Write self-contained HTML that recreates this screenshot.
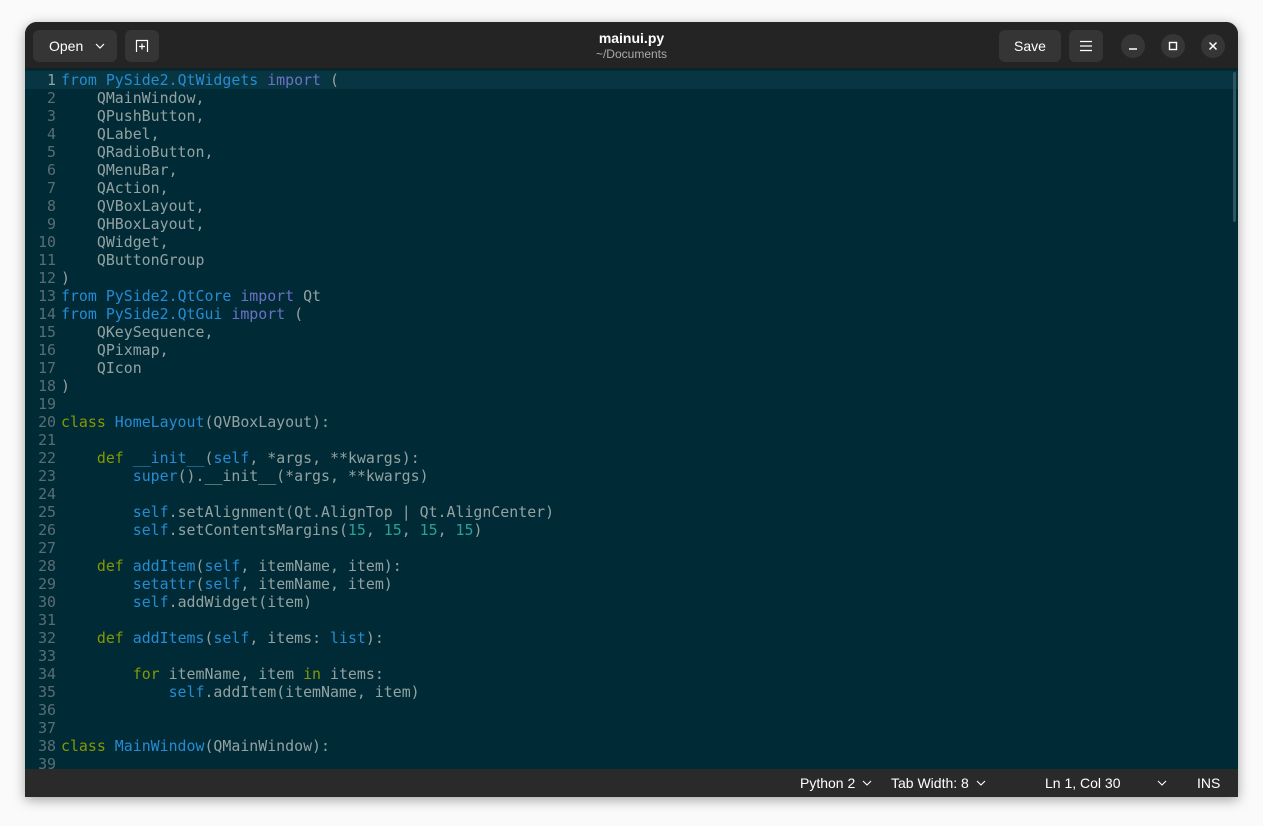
<!DOCTYPE html>
<html><head><meta charset="utf-8"><style>
*{margin:0;padding:0;box-sizing:border-box}
body{width:1263px;height:826px;background:#fafafa;position:relative;overflow:hidden;font-family:"Liberation Sans",sans-serif}
.win{position:absolute;left:25px;top:22px;width:1213px;height:775px;border-radius:12px 12px 0 0;overflow:hidden;box-shadow:0 3px 12px rgba(0,0,0,.35);background:#002b36}
.hdr{position:absolute;left:0;top:0;width:100%;height:47px;background:#242424;border-bottom:1px solid #1a1a1a}
.btn{position:absolute;top:8px;height:32px;background:#353535;border-radius:6px;color:#fff;font-size:14px;line-height:32px;text-align:center}
.cb{position:absolute;top:12px;width:24px;height:24px;border-radius:50%;background:#363636}
.title{position:absolute;left:0;width:100%;text-align:center;color:#fff}
.ed{position:absolute;left:0;top:47px;width:100%;height:700px;background:#002b36}
.cur{position:absolute;left:0;top:2px;width:100%;height:18px;background:#073642}
.code{position:absolute;left:0;top:2px;font-family:"DejaVu Sans Mono","Liberation Mono",monospace;font-size:14.9px;line-height:18px;color:#93a1a1;white-space:pre}
.ln{display:inline-block;width:31px;text-align:right;color:#586e75;margin-right:5px}
.k{color:#859900}.b{color:#268bd2}.p{color:#6c71c4}.n{color:#2aa198}
.sb{position:absolute;left:0;top:747px;width:100%;height:28px;background:#2a2a2a;color:#fff;font-size:14px;line-height:28px}
.sb span{position:absolute}
</style></head><body>
<div class="win">
<div class="hdr">
<div class="btn" style="left:8px;width:84px;text-align:left;padding-left:16px">Open <svg style="position:absolute;left:62px;top:13px" width="10" height="6"><path d="M1 1L5 5L9 1" stroke="#fff" fill="none" stroke-width="1.2"/></svg></div>
<div class="btn" style="left:100px;width:34px"><svg width="14" height="14" style="margin-top:9px"><path d="M1.5 13V1.5H12.5V13M7 4.5V10.5M4 7.5H10" stroke="#fff" fill="none" stroke-width="1.2"/></svg></div>
<div class="title" style="top:8px;font-size:14px;font-weight:bold">mainui.py</div>
<div class="title" style="top:25px;font-size:12px;color:#aaa">~/Documents</div>
<div class="btn" style="left:974px;width:62px">Save</div>
<div class="btn" style="left:1044px;width:34px"><svg width="12" height="12" style="margin-top:10px"><path d="M0 1.5H12M0 6H12M0 10.5H12" stroke="#fff" stroke-width="1.2"/></svg></div>
<div class="cb" style="left:1096px"><svg width="24" height="24"><path d="M8 15H16" stroke="#fff" stroke-width="1.4"/></svg></div>
<div class="cb" style="left:1136px"><svg width="24" height="24"><rect x="8.5" y="8.5" width="7" height="7" stroke="#fff" fill="none" stroke-width="1.4"/></svg></div>
<div class="cb" style="left:1176px"><svg width="24" height="24"><path d="M8.5 8.5L15.5 15.5M15.5 8.5L8.5 15.5" stroke="#fff" stroke-width="1.5"/></svg></div>
</div>
<div class="ed">
<div class="cur"></div>
<div style="position:absolute;left:1208px;top:3px;width:3px;height:150px;background:#2f5560;border-radius:2px"></div>
<div class="code"><span class="ln" style="color:#93a1a1">1</span><span class="b">from</span> <span class="b">PySide2.QtWidgets</span> <span class="p">import</span> (
<span class="ln">2</span>    QMainWindow,
<span class="ln">3</span>    QPushButton,
<span class="ln">4</span>    QLabel,
<span class="ln">5</span>    QRadioButton,
<span class="ln">6</span>    QMenuBar,
<span class="ln">7</span>    QAction,
<span class="ln">8</span>    QVBoxLayout,
<span class="ln">9</span>    QHBoxLayout,
<span class="ln">10</span>    QWidget,
<span class="ln">11</span>    QButtonGroup
<span class="ln">12</span>)
<span class="ln">13</span><span class="b">from</span> <span class="b">PySide2.QtCore</span> <span class="p">import</span> Qt
<span class="ln">14</span><span class="b">from</span> <span class="b">PySide2.QtGui</span> <span class="p">import</span> (
<span class="ln">15</span>    QKeySequence,
<span class="ln">16</span>    QPixmap,
<span class="ln">17</span>    QIcon
<span class="ln">18</span>)
<span class="ln">19</span>
<span class="ln">20</span><span class="k">class</span> <span class="b">HomeLayout</span>(QVBoxLayout):
<span class="ln">21</span>
<span class="ln">22</span>    <span class="k">def</span> <span class="b">__init__</span>(<span class="b">self</span>, *args, **kwargs):
<span class="ln">23</span>        <span class="b">super</span>().__init__(*args, **kwargs)
<span class="ln">24</span>
<span class="ln">25</span>        <span class="b">self</span>.setAlignment(Qt.AlignTop | Qt.AlignCenter)
<span class="ln">26</span>        <span class="b">self</span>.setContentsMargins(<span class="n">15</span>, <span class="n">15</span>, <span class="n">15</span>, <span class="n">15</span>)
<span class="ln">27</span>
<span class="ln">28</span>    <span class="k">def</span> <span class="b">addItem</span>(<span class="b">self</span>, itemName, item):
<span class="ln">29</span>        <span class="b">setattr</span>(<span class="b">self</span>, itemName, item)
<span class="ln">30</span>        <span class="b">self</span>.addWidget(item)
<span class="ln">31</span>
<span class="ln">32</span>    <span class="k">def</span> <span class="b">addItems</span>(<span class="b">self</span>, items: <span class="b">list</span>):
<span class="ln">33</span>
<span class="ln">34</span>        <span class="k">for</span> itemName, item <span class="k">in</span> items:
<span class="ln">35</span>            <span class="b">self</span>.addItem(itemName, item)
<span class="ln">36</span>
<span class="ln">37</span>
<span class="ln">38</span><span class="k">class</span> <span class="b">MainWindow</span>(QMainWindow):
<span class="ln">39</span>
</div>
</div>
<div class="sb">
<span style="left:775px">Python 2 <svg width="10" height="6" style="margin-left:3px;margin-bottom:2px"><path d="M1 1L5 5L9 1" stroke="#fff" fill="none" stroke-width="1.1"/></svg></span>
<span style="left:866px">Tab Width: 8 <svg width="10" height="6" style="margin-left:3px;margin-bottom:2px"><path d="M1 1L5 5L9 1" stroke="#fff" fill="none" stroke-width="1.1"/></svg></span>
<span style="left:1020px">Ln 1, Col 30</span>
<span style="left:1132px"><svg width="10" height="6" style="margin-bottom:2px"><path d="M1 1L5 5L9 1" stroke="#fff" fill="none" stroke-width="1.1"/></svg></span>
<span style="left:1172px">INS</span>
</div>
</div>
</body></html>
